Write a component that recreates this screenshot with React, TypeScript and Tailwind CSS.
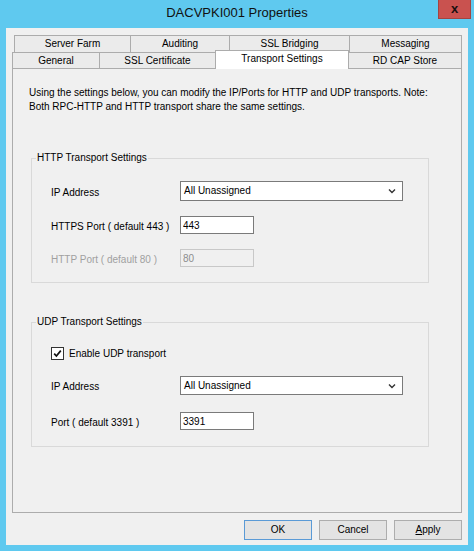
import React from 'react';

const rowOne = [
  { label: 'Server Farm', w: 'w-[117px]' },
  { label: 'Auditing', w: 'w-[100px]' },
  { label: 'SSL Bridging', w: 'w-[121px]' },
  { label: 'Messaging', w: 'w-[113px]' },
];

const rowTwo = [
  { label: 'General', w: 'w-[88px]' },
  { label: 'SSL Certificate', w: 'w-[117px]' },
  { label: 'Transport Settings', w: 'w-[134px]', active: true },
  { label: 'RD CAP Store', w: 'w-[114px]' },
];

function Select({ value }: { value: string }) {
  return (
    <div className="flex h-full w-[223px] items-center justify-between border border-[#7a7a7a] bg-white pl-[3px] pr-[6px]">
      <span>{value}</span>
      <svg width="8" height="6" viewBox="0 0 8 6">
        <polyline points="1,1.5 4,4.5 7,1.5" fill="none" stroke="#333" strokeWidth="1.4" />
      </svg>
    </div>
  );
}

function TextBox({ value, disabled }: { value: string; disabled?: boolean }) {
  return (
    <input
      readOnly
      disabled={disabled}
      defaultValue={value}
      className={
        disabled
          ? 'h-full w-[74px] border border-[#c8c8c8] bg-[#f0f0f0] px-[2px] text-[#8d8d8d] outline-none'
          : 'h-full w-[74px] border border-[#7a7a7a] bg-white px-[2px] text-black outline-none'
      }
    />
  );
}

function Field({
  label,
  className,
  disabled,
  children,
}: {
  label: string;
  className: string;
  disabled?: boolean;
  children: React.ReactNode;
}) {
  return (
    <div className={`flex items-center ${className}`}>
      <span className={`w-[129px] pt-[3px] ${disabled ? 'text-[#a0a0a0]' : ''}`}>{label}</span>
      {children}
    </div>
  );
}

export default function App() {
  return (
    <div className="flex h-[551px] w-[474px] flex-col bg-[#5fc9ef] px-[6px] pb-[6px] font-['Liberation_Sans',Arial,sans-serif] text-[10px] leading-[14px] text-black">
      {/* title bar */}
      <div className="relative -mx-[6px] flex h-[28px] items-center justify-center pb-[2px]">
        <span className="text-[13px] text-[#111]">DACVPKI001 Properties</span>
        <div className="absolute right-[3px] top-0 flex h-[19px] w-[33px] items-center justify-center border border-t-0 border-[#a34440] bg-[#c9524f] pb-px text-[13px] font-bold text-[#1a1010]">
          x
        </div>
      </div>

      {/* client area */}
      <div className="flex flex-1 flex-col bg-[#f0f0f0] px-[6px] pb-[5px] pt-[7px]">
        {/* tabs */}
        <div className="ml-[2px] flex h-[18px]">
          {rowOne.map((t, i) => (
            <div
              key={t.label}
              className={`${t.w} ${i > 0 ? '-ml-px' : ''} flex h-[18px] items-center justify-center border border-[#acacac] bg-[#ebebeb]`}
            >
              {t.label}
            </div>
          ))}
        </div>
        <div className="-mt-px flex h-[16px] items-end">
          {rowTwo.map((t, i) =>
            t.active ? (
              <div
                key={t.label}
                className={`${t.w} relative z-10 -mb-px -ml-px flex h-[19px] items-start justify-center border border-b-0 border-[#acacac] bg-white pt-px`}
              >
                {t.label}
              </div>
            ) : (
              <div
                key={t.label}
                className={`${t.w} ${i > 0 ? '-ml-px' : ''} flex h-[16px] items-center justify-center border border-b-0 border-[#acacac] bg-[#ebebeb] pt-px`}
              >
                {t.label}
              </div>
            ),
          )}
        </div>

        {/* tab panel */}
        <div className="flex flex-1 flex-col border border-[#acacac] bg-[#f0f0f0] pt-[17px]">
          <p className="pl-[16px]">
            Using the settings below, you can modify the IP/Ports for HTTP and UDP transports. Note:
            <br />
            Both RPC-HTTP and HTTP transport share the same settings.
          </p>

          <fieldset className="ml-[18px] mt-[37px] w-[398px] border border-[#d9d9d9] pb-[15px] pl-[4px]">
            <legend className="px-[1px]">HTTP Transport Settings</legend>
            <div className="pl-[15px]">
              <Field label="IP Address" className="mt-[16px] h-[20px]">
                <Select value="All Unassigned" />
              </Field>
              <Field label="HTTPS Port ( default 443 )" className="mt-[15px] h-[18px]">
                <TextBox value="443" />
              </Field>
              <Field label="HTTP Port ( default 80 )" className="mt-[15px] h-[18px]" disabled>
                <TextBox value="80" disabled />
              </Field>
            </div>
          </fieldset>

          <fieldset className="ml-[18px] mt-[32px] w-[398px] border border-[#d9d9d9] pb-[16px] pl-[4px]">
            <legend className="px-[1px]">UDP Transport Settings</legend>
            <div className="pl-[15px]">
              <div className="mt-[18px] flex h-[13px] items-center gap-[5px]">
                <span className="flex h-[13px] w-[13px] items-center justify-center border border-[#333] bg-white">
                  <svg width="9" height="9" viewBox="0 0 9 9">
                    <polyline points="1.2,4.6 3.4,7 7.8,1.6" fill="none" stroke="#111" strokeWidth="1.7" />
                  </svg>
                </span>
                <span>Enable UDP transport</span>
              </div>
              <Field label="IP Address" className="mt-[16px] h-[19px]">
                <Select value="All Unassigned" />
              </Field>
              <Field label="Port ( default 3391 )" className="mt-[17px] h-[18px]">
                <TextBox value="3391" />
              </Field>
            </div>
          </fieldset>
        </div>

        {/* buttons */}
        <div className="mt-[7px] flex h-[20px] justify-end gap-[7px]">
          <button className="w-[68px] border border-[#5a9ad6] bg-[#e3e3e3]">OK</button>
          <button className="w-[68px] border border-[#adadad] bg-[#e3e3e3]">Cancel</button>
          <button className="w-[68px] border border-[#adadad] bg-[#e3e3e3]">
            <span className="underline">A</span>pply
          </button>
        </div>
      </div>
    </div>
  );
}
